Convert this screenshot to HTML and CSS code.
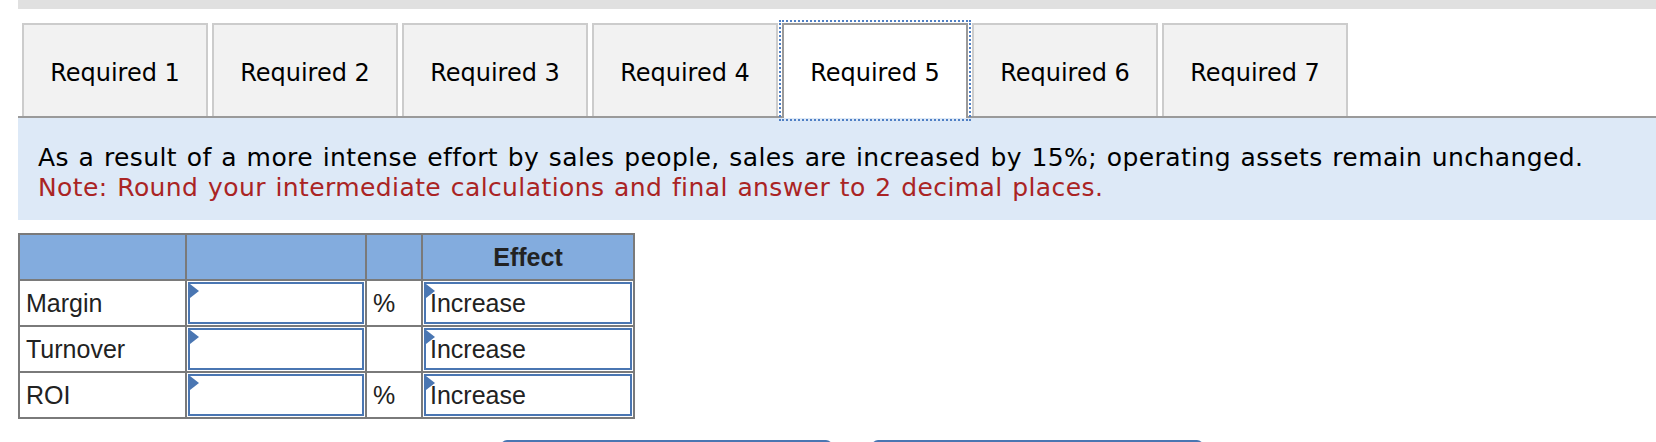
FILE: index.html
```html
<!DOCTYPE html>
<html lang="en">

<head>
    <meta charset="UTF-8" />
    <meta name="viewport" content="width=device-width, initial-scale=1.0" />
    <title>Required 5</title>
    <link rel="stylesheet" href="styles.css">
</head>

<body>
    <div class="topbar"></div>
    <div class="tabs">
        <div class="tab">Required 1</div>
        <div class="tab">Required 2</div>
        <div class="tab">Required 3</div>
        <div class="tab">Required 4</div>
        <div class="tab active">Required 5</div>
        <div class="tab">Required 6</div>
        <div class="tab">Required 7</div>
    </div>
    <div class="prompt">
        <p>As a result of a more intense effort by sales people, sales are increased by 15%; operating assets remain unchanged.</p>
        <p class="note">Note: Round your intermediate calculations and final answer to 2 decimal places.</p>
    </div>
    <table class="grid">
        <colgroup>
            <col class="c1">
            <col class="c2">
            <col class="c3">
            <col class="c4">
        </colgroup>
        <tr class="head">
            <th></th>
            <th></th>
            <th></th>
            <th>Effect</th>
        </tr>
        <tr>
            <td class="label">Margin</td>
            <td class="cell"><div class="field"></div></td>
            <td class="unit">%</td>
            <td class="cell"><div class="field pick">Increase</div></td>
        </tr>
        <tr>
            <td class="label">Turnover</td>
            <td class="cell"><div class="field"></div></td>
            <td class="unit"></td>
            <td class="cell"><div class="field pick">Increase</div></td>
        </tr>
        <tr>
            <td class="label">ROI</td>
            <td class="cell"><div class="field"></div></td>
            <td class="unit">%</td>
            <td class="cell"><div class="field pick">Increase</div></td>
        </tr>
    </table>
    <div class="actions">
        <div class="btn"></div>
        <div class="btn"></div>
    </div>
</body>

</html>
```

FILE: styles.css
```css
* {
    margin: 0;
    padding: 0;
    box-sizing: border-box;
}

html,
body {
    overflow: hidden;
}

body {
    font-family: "DejaVu Sans", Verdana, sans-serif;
    color: #000;
    background: #fff;
}

.topbar {
    margin-left: 18px;
    height: 9px;
    background-color: #e0e0e0;
}

.tabs {
    display: flex;
    gap: 4px;
    height: 95px;
    margin: 14px 0 0 18px;
    padding-left: 4px;
    border-bottom: 2px solid #9a9a9a;
}

.tab {
    width: 186px;
    display: flex;
    align-items: center;
    justify-content: center;
    padding-top: 4px;
    border: 2px solid #cccccc;
    border-bottom: none;
    background-color: #f2f2f2;
    font-size: 24px;
}

.tab.active {
    background-color: #fff;
    border-color: #9a9a9a;
    margin-bottom: -2px;
    padding-top: 2px;
    outline: 2px dotted #4f7fc4;
    outline-offset: 1px;
}

.prompt {
    margin-left: 18px;
    padding: 25px 20px 17px;
    background-color: #dde9f7;
    font-size: 25px;
    line-height: 30px;
    letter-spacing: 0.4px;
    word-spacing: 1.3px;
}

.note {
    color: #aa2424;
}

.grid {
    margin: 13px 0 0 18px;
    width: 615px;
    table-layout: fixed;
    border-collapse: collapse;
    font-family: "Liberation Sans", Arial, sans-serif;
    font-size: 25px;
    color: #222;
}

.c1 {
    width: 167px;
}

.c2 {
    width: 180px;
}

.c3 {
    width: 56px;
}

.c4 {
    width: 212px;
}

.grid th,
.grid td {
    height: 46px;
    border: 2px solid #7a7a7a;
    padding: 0 6px;
    text-align: left;
}

.grid th {
    background-color: #83acde;
    text-align: center;
    font-weight: bold;
}

.grid td.cell {
    padding: 1px;
}

.field {
    position: relative;
    height: 42px;
    border: 2px solid #4a76b2;
    background: #fff;
}

.field::before {
    content: "";
    position: absolute;
    top: 0;
    left: 0;
    border-left: 9px solid #4a76b2;
    border-top: 7px solid transparent;
    border-bottom: 7px solid transparent;
}

.pick {
    padding-left: 4px;
    line-height: 38px;
}

.actions {
    display: flex;
    gap: 40px;
    margin-top: 21px;
    padding-left: 501px;
}

.btn {
    width: 331px;
    height: 40px;
    border-radius: 6px;
    background-color: #4a76b2;
}
```
